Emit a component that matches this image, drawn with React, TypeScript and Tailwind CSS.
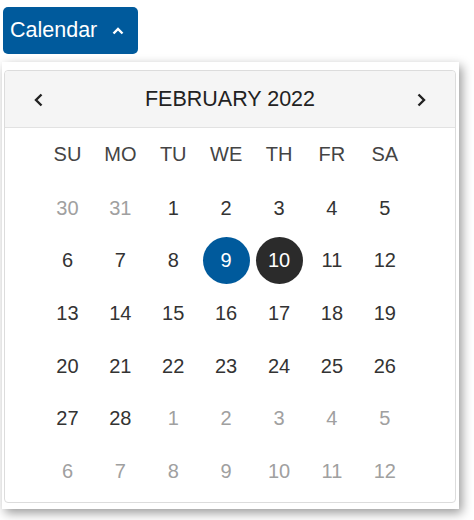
import React from "react";

const days: { d: number; muted?: boolean }[] = [
  { d: 30, muted: true }, { d: 31, muted: true },
  ...Array.from({ length: 28 }, (_, i) => ({ d: i + 1 })),
  ...Array.from({ length: 12 }, (_, i) => ({ d: i + 1, muted: true })),
];

export default function App() {
  const names = ["SU", "MO", "TU", "WE", "TH", "FR", "SA"];
  return (
    <div className="w-[474px] h-[520px] bg-white pl-[3px] pt-[7px]" style={{ fontFamily: '"Liberation Sans", Arial, sans-serif' }}>
      <button className="h-[47px] w-[135px] rounded-[5px] bg-[#005a9c] text-white text-[21.5px] flex items-center pl-[7px]">
        <span>Calendar</span>
        <svg width="12" height="8" viewBox="0 0 12 8" className="ml-[15px] mt-[1px]">
          <polyline points="1.5,6.5 6,2 10.5,6.5" fill="none" stroke="white" strokeWidth="2.4" />
        </svg>
      </button>
      <div className="ml-[-1px] mt-[8px] w-[457px] bg-white pt-[8px] pl-[2px] pr-[3px] pb-[6px] shadow-[3px_4px_10px_rgba(0,0,0,0.4)]">
        <div className="border border-[#dcdcdc] rounded-[4px] bg-white">
          <div className="h-[57px] bg-[#f5f5f5] border-b border-[#e2e2e2] rounded-t-[4px] flex items-center justify-between px-[27px]">
            <svg width="14" height="14" viewBox="0 0 14 14" className="mt-[1px]">
              <polyline points="9.5,1.5 4,7 9.5,12.5" fill="none" stroke="#222" strokeWidth="2.4" />
            </svg>
            <span className="text-[21.5px] text-[#222]">FEBRUARY 2022</span>
            <svg width="14" height="14" viewBox="0 0 14 14" className="mt-[1px]">
              <polyline points="4.5,1.5 10,7 4.5,12.5" fill="none" stroke="#222" strokeWidth="2.4" />
            </svg>
          </div>
          <div className="grid grid-cols-[repeat(7,52.9px)] auto-rows-[52.6px] pl-[36px] pb-[6px]">
            {names.map((n) => (
              <div key={n} className="flex items-center justify-center text-[20px] text-[#444]">{n}</div>
            ))}
            {days.map((x, i) => {
              const sel = !x.muted && x.d === 9;
              const today = !x.muted && x.d === 10;
              return (
                <div key={i} className="flex items-center justify-center pt-[2px]">
                  {sel ? (
                    <span className="w-[47px] h-[47px] rounded-full bg-[#005a9c] text-white text-[20px] flex items-center justify-center">{x.d}</span>
                  ) : today ? (
                    <span className="w-[47px] h-[47px] rounded-full bg-[#2b2b2b] text-white text-[20px] flex items-center justify-center">{x.d}</span>
                  ) : (
                    <span className={`text-[20px] ${x.muted ? "text-[#a0a0a0]" : "text-[#333]"}`}>{x.d}</span>
                  )}
                </div>
              );
            })}
          </div>
        </div>
      </div>
    </div>
  );
}
